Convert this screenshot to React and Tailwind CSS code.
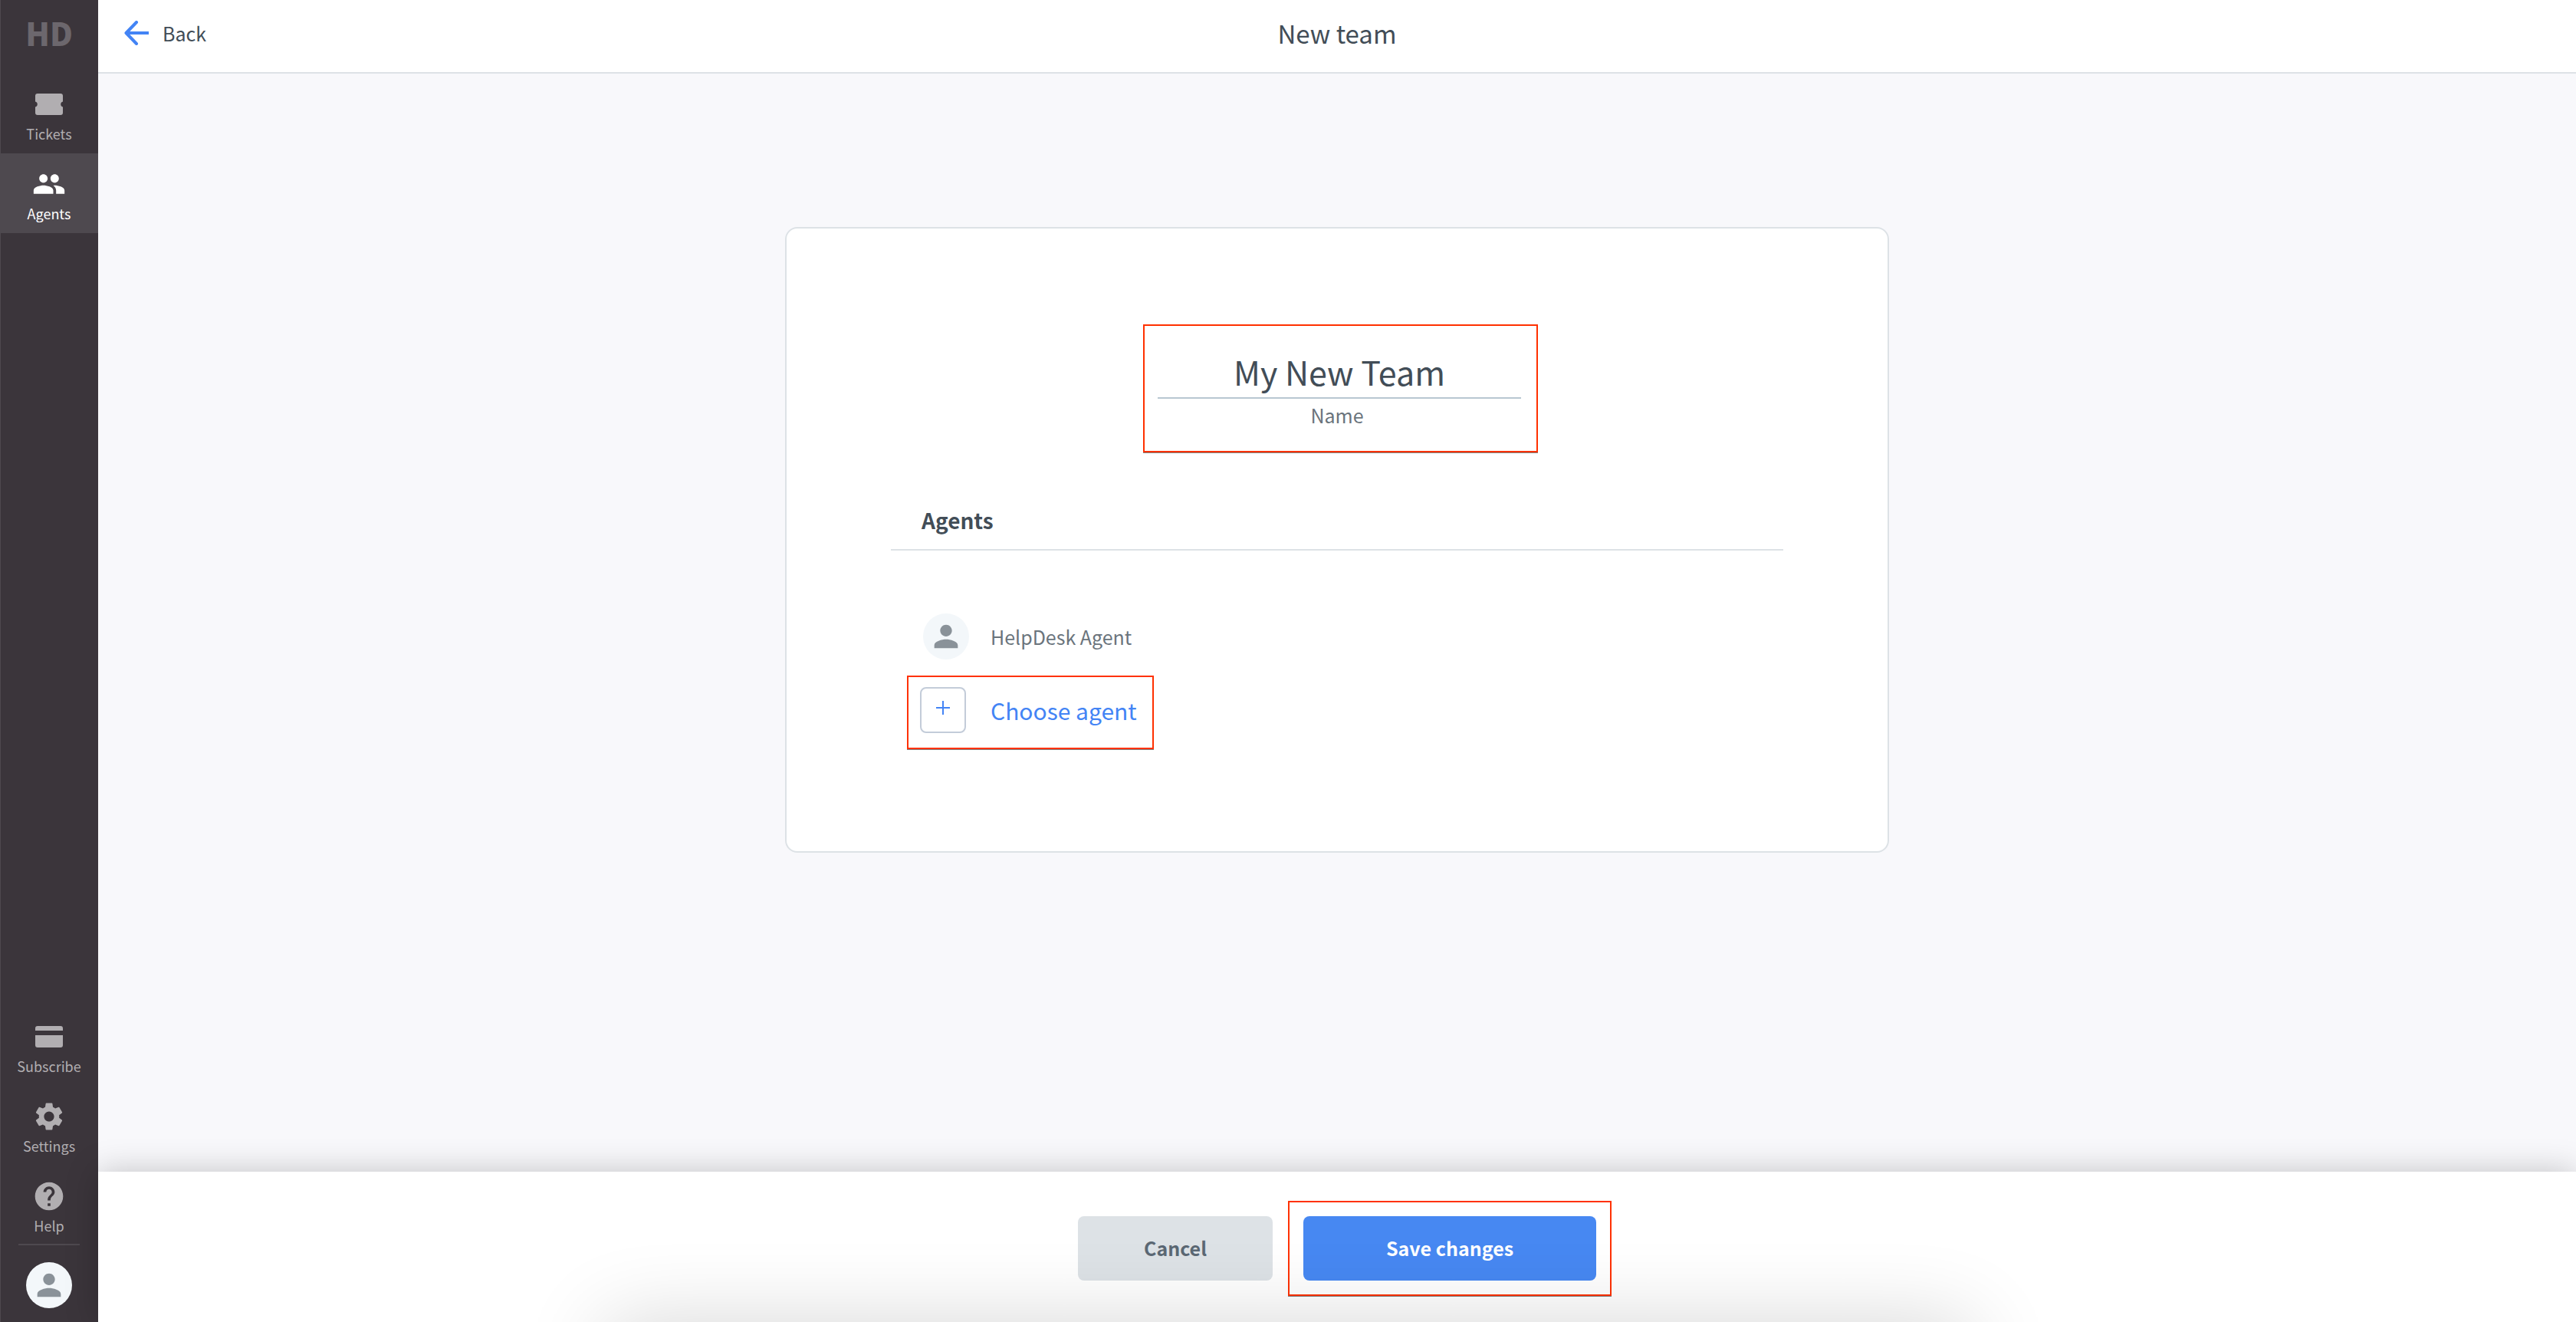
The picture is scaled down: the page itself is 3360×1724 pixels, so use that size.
import React, { useState } from 'react';
import { MdHelp, MdPeople, MdPerson, MdSettings } from 'react-icons/md';

const TicketIcon = () => (
  <svg viewBox="0 0 44 44" className="size-11" fill="currentColor" aria-hidden="true">
    <path d="M7 8h30a3 3 0 0 1 3 3v7.500a3.600 3.600 0 0 0 0 7V33a3 3 0 0 1-3 3H7a3 3 0 0 1-3-3v-7.500a3.600 3.600 0 0 0 0-7V11a3 3 0 0 1 3-3z" />
  </svg>
);

const CardIcon = () => (
  <svg viewBox="0 0 44 44" className="size-11" fill="currentColor" aria-hidden="true">
    <path d="M7 8h30a3 3 0 0 1 3 3v3H4v-3a3 3 0 0 1 3-3zM4 20h36v13a3 3 0 0 1-3 3H7a3 3 0 0 1-3-3z" />
  </svg>
);

const BackArrow = () => (
  <svg viewBox="0 0 32 32" className="size-8 text-[#4384f5]" fill="none" stroke="currentColor" strokeWidth="4" aria-hidden="true">
    <path d="M32 16H3" />
    <path d="M16 2 2.500 16 16 30" strokeLinecap="round" strokeLinejoin="round" />
  </svg>
);

const topNav = [
  { label: 'Tickets', icon: <TicketIcon /> },
  { label: 'Agents', icon: <MdPeople className="size-11" />, active: true },
];

const bottomNav = [
  { label: 'Subscribe', icon: <CardIcon /> },
  { label: 'Settings', icon: <MdSettings className="size-11" /> },
  { label: 'Help', icon: <MdHelp className="size-11" /> },
];

const NavItem = ({ label, icon, active }) => (
  <a
    href="#"
    className={`flex h-[104px] flex-col items-center pt-[18px] text-[18px] leading-8 ${
      active ? 'bg-[#4e494f] text-white' : 'text-[#b1aeb1]'
    }`}
  >
    {icon}
    <span>{label}</span>
  </a>
);

const Avatar = () => (
  <span className="flex size-15 items-center justify-center rounded-full bg-[#f3f7fa] text-[#8a9299]">
    <MdPerson className="size-[46px]" />
  </span>
);

// Red frame that marks a step of the tutorial
const Highlight = ({ className }) => (
  <span
    className={`pointer-events-none absolute border-2 border-[#ff3100] shadow-[0_1px_0_#808080] ${className}`}
  />
);

const Sidebar = () => (
  <nav className="flex w-32 shrink-0 flex-col bg-[#3b353b] shadow-[inset_1px_0_0_#4e494f]">
    <div className="flex h-24 items-center justify-center pb-3 text-[41px] leading-none font-black text-[#6c676d]">
      HD
    </div>
    {topNav.map((item) => (
      <NavItem key={item.label} {...item} />
    ))}
    <div className="mt-auto">
      {bottomNav.map((item) => (
        <NavItem key={item.label} {...item} />
      ))}
    </div>
    <div className="mx-6 -mt-0.5 flex justify-center border-t-2 border-[#4e494f] pt-[22px] pb-[18px]">
      <button type="button" aria-label="Profile">
        <Avatar />
      </button>
    </div>
  </nav>
);

const App = () => {
  const [name, setName] = useState('My New Team');

  return (
    <div className="flex min-h-screen bg-[#f8f8fb] font-['Noto_Sans_CJK_SC','Source_Sans_Pro',sans-serif] text-[#424d57]">
      <Sidebar />

      <div className="flex min-w-0 flex-1 flex-col">
        <header className="grid h-24 grid-cols-3 items-center border-b-2 border-[#dde2e6] bg-white px-[34px] pb-2">
          <a href="#" className="flex items-center gap-[18px] text-[25px] leading-9">
            <BackArrow />
            Back
          </a>
          <h1 className="text-center text-[33px] leading-9">New team</h1>
        </header>

        <main className="flex flex-1 flex-col items-center pt-50">
          <form
            id="team-form"
            onSubmit={(e) => e.preventDefault()}
            className="w-full max-w-[1440px] rounded-2xl border-2 border-[#dde2e6] bg-white px-[136px] pt-[152px] pb-[154px]"
          >
            <div className="relative mx-auto flex w-[480px] flex-col">
              <input
                id="team-name"
                type="text"
                value={name}
                onChange={(e) => setName(e.target.value)}
                className="ml-auto h-[70px] w-[474px] border-b-2 border-[#b8c7d1] text-center text-[43px] outline-none"
              />
              <label htmlFor="team-name" className="text-center text-[25px] leading-[42px] text-[#6a747c]">
                Name
              </label>
              <Highlight className="-top-[27px] -right-[22px] -bottom-7 -left-[13px]" />
            </div>

            <h2 className="mt-[78px] border-b-2 border-[#dde2e6] pl-10 text-[28px] leading-[76px] font-bold">
              Agents
            </h2>

            <ul className="mt-[82px] flex flex-col items-start gap-9 pl-[38px]">
              <li className="flex items-center gap-7 text-[25px] leading-9 text-[#6a747c]">
                <span className="flex w-16 justify-end">
                  <Avatar />
                </span>
                HelpDesk Agent
              </li>
              <li className="relative">
                <button type="button" className="flex items-center gap-7 text-[30px] leading-9 text-[#4384f5]">
                  <span className="flex w-16">
                    <span className="flex size-15 justify-center rounded-lg border-2 border-[#c3ccd9] pt-4">
                      <svg viewBox="0 0 18 18" className="size-[18px]" stroke="currentColor" strokeWidth="2" aria-hidden="true">
                        <path d="M9 0v18M0 9h18" />
                      </svg>
                    </span>
                  </span>
                  Choose agent
                </button>
                <Highlight className="-top-[15px] -right-[22px] -bottom-[21px] -left-[17px]" />
              </li>
            </ul>
          </form>
        </main>

        <footer className="flex justify-center gap-10 bg-white pt-[58px] pb-[54px] shadow-[0_0_40px_rgba(0,0,0,0.22)]">
          <button
            type="button"
            className="h-[84px] w-[254px] rounded-lg bg-[#dde2e6] text-[25px] font-bold text-[#5b6874]"
          >
            Cancel
          </button>
          <div className="relative">
            <button
              type="submit"
              form="team-form"
              className="h-[84px] w-[382px] rounded-lg bg-[#4788f2] text-[25px] font-bold text-white"
            >
              Save changes
            </button>
            <Highlight className="-inset-5" />
          </div>
        </footer>
      </div>

      <div className="pointer-events-none fixed inset-x-[790px] top-full h-40 shadow-[0_0_110px_rgba(0,0,0,0.16)]" />
    </div>
  );
};

export default App;
